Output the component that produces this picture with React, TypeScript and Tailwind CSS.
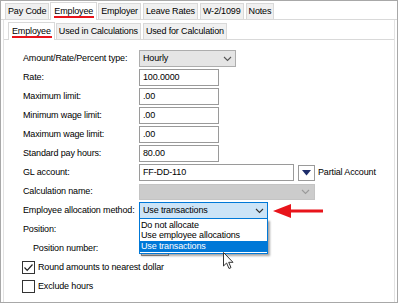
import React from 'react';

const font = { fontFamily: '"Liberation Sans", Arial, sans-serif' };

function Tab({ label, selected, underline }: { label: string; selected?: boolean; underline?: boolean }) {
  return (
    <div
      className={
        selected
          ? "relative h-[18px] px-[3px] flex items-center bg-white border border-b-0 border-[#d9d9d9] -mb-px z-10"
          : "relative h-[16px] px-[2px] flex items-center bg-[#f0f0f0] border border-[#d9d9d9] border-b-0 mx-[1px]"
      }
    >
      <span className="leading-none whitespace-nowrap">{label}</span>
      {underline && <div className="absolute left-[3px] right-[2px] bottom-[2px] h-[2px] bg-[#e8141b]" />}
    </div>
  );
}

function Chevron({ color = "#555" }: { color?: string }) {
  return (
    <svg width="9" height="6" viewBox="0 0 9 6">
      <path d="M1 1 L4.5 4.5 L8 1" fill="none" stroke={color} strokeWidth="1.1" />
    </svg>
  );
}

function TextBox({ value, w = "w-[80px]" }: { value: string; w?: string }) {
  return (
    <div className={`${w} h-[17px] border border-[#9a9a9a] bg-white flex items-center px-[3px]`}>{value}</div>
  );
}

function Row({ label, children, indent }: { label: string; children?: React.ReactNode; indent?: boolean }) {
  return (
    <div className="h-[19px] flex items-center">
      <div className={indent ? "w-[116px] pl-[10px] whitespace-nowrap" : "w-[116px] whitespace-nowrap"}>{label}</div>
      {children}
    </div>
  );
}

function Check({ checked }: { checked?: boolean }) {
  return (
    <div className="w-[13px] h-[13px] border border-[#333] bg-white flex items-center justify-center">
      {checked && (
        <svg width="11" height="11" viewBox="0 0 11 11">
          <path d="M1.5 5.5 L4.2 8.3 L9.5 2.5" fill="none" stroke="#222" strokeWidth="1.2" />
        </svg>
      )}
    </div>
  );
}

export default function App() {
  return (
    <div style={font} className="relative w-[398px] h-[303px] bg-white border border-[#a8a8a8] overflow-hidden text-[9px] tracking-[-0.15px] text-black">
      {/* top tabs */}
      <div className="h-[19px] flex items-end pl-[3px] border-b border-[#d9d9d9]">
        <Tab label="Pay Code" />
        <Tab label="Employee" selected underline />
        <Tab label="Employer" />
        <Tab label="Leave Rates" />
        <Tab label="W-2/1099" />
        <Tab label="Notes" />
      </div>

      <div className="mx-[2px] border-l border-r border-[#e3e3e3] h-[282px]">
        {/* inner tabs */}
        <div className="h-[20px] flex items-end pl-[4px] border-b border-[#d9d9d9]">
          <Tab label="Employee" selected underline />
          <Tab label="Used in Calculations" />
          <Tab label="Used for Calculation" />
        </div>

        <div className="relative pt-[9px] pl-[19px]">
          <Row label="Amount/Rate/Percent type:">
            <div className="w-[97px] h-[17px] border border-[#adadad] bg-[#e5e5e5] flex items-center justify-between px-[3px]">
              <span>Hourly</span>
              <Chevron />
            </div>
          </Row>
          <Row label="Rate:"><TextBox value="100.0000" /></Row>
          <Row label="Maximum limit:"><TextBox value=".00" /></Row>
          <Row label="Minimum wage limit:"><TextBox value=".00" /></Row>
          <Row label="Maximum wage limit:"><TextBox value=".00" /></Row>
          <Row label="Standard pay hours:"><TextBox value="80.00" /></Row>
          <Row label="GL account:">
            <TextBox value="FF-DD-110" w="w-[155px]" />
            <div className="ml-[4px] w-[17px] h-[16px] border border-[#9a9a9a] bg-white flex items-center justify-center">
              <svg width="9" height="6" viewBox="0 0 9 6"><path d="M0 0 H9 L4.5 5.5 Z" fill="#1d2d6b" /></svg>
            </div>
            <span className="ml-[3px]">Partial Account</span>
          </Row>
          <Row label="Calculation name:">
            <div className="w-[176px] h-[16px] border border-[#c4c4c4] bg-[#cccccc] flex items-center justify-end px-[4px]">
              <Chevron color="#9a9a9a" />
            </div>
          </Row>
          <Row label="Employee allocation method:">
            <div className="w-[129px] h-[17px] border border-[#0078d7] bg-[#cce4f7] flex items-center justify-between px-[3px]">
              <span>Use transactions</span>
              <Chevron color="#333" />
            </div>
            <svg className="ml-[5px]" width="50" height="14" viewBox="0 0 50 14">
              <path d="M0 7 L18 0 L18 5.5 L50 5.5 L50 8.5 L18 8.5 L18 14 Z" fill="#e8141b" />
            </svg>
          </Row>
          <Row label="Position:" />
          <Row label="Position number:" indent>
            <div className="ml-[2px] w-[28px] h-[15px] border border-[#9a9a9a] bg-white" />
          </Row>
          <div className="h-[19px] flex items-center gap-[3px] -ml-[1px]">
            <Check checked />
            <span>Round amounts to nearest dollar</span>
          </div>
          <div className="h-[19px] flex items-center gap-[3px] -ml-[1px]">
            <Check />
            <span>Exclude hours</span>
          </div>

          {/* open dropdown list */}
          <div className="absolute left-[135px] top-[179px] w-[129px] bg-white border border-[#0078d7] border-t-0 shadow-[2px_2px_2px_rgba(0,0,0,0.35)] py-[1px]">
            <div className="h-[10.5px] flex items-center px-[1px]">Do not allocate</div>
            <div className="h-[10.5px] flex items-center px-[1px]">Use employee allocations</div>
            <div className="h-[11px] flex items-center px-[1px] bg-[#0078d7] text-white">Use transactions</div>
          </div>

          {/* mouse cursor */}
          <svg className="absolute left-[219px] top-[212px]" width="12" height="18" viewBox="0 0 12 18">
            <path d="M0.5 0.5 L0.5 14 L3.6 11 L6 16.5 L8 15.6 L5.7 10.3 L10 10.3 Z" fill="#fff" stroke="#333" strokeWidth="1" />
          </svg>
        </div>
      </div>
    </div>
  );
}
